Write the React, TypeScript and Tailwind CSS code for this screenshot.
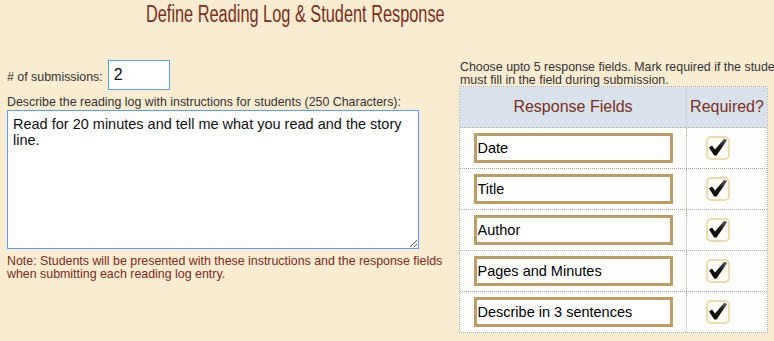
import React from "react";

const fields = ["Date", "Title", "Author", "Pages and Minutes", "Describe in 3 sentences"];

function Check() {
  return (
    <div className="relative w-[24px] h-[24px] rounded-[5px] border-2 border-[#eadcae] bg-[#fffdf6]">
      <svg width="24" height="24" viewBox="0 0 24 24" className="absolute left-[-2px] top-[-2px]">
        <defs>
          <linearGradient id="ck" x1="0" y1="1" x2="1" y2="0">
            <stop offset="0" stopColor="#000" />
            <stop offset="0.6" stopColor="#1a1a1a" />
            <stop offset="1" stopColor="#6a6a6a" />
          </linearGradient>
        </defs>
        <polygon
          points="3,11.5 6,9.6 9,13.6 18.2,2.8 21.2,4 10.6,19.6 8.2,19.6"
          fill="url(#ck)"
        />
      </svg>
    </div>
  );
}

export default function App() {
  return (
    <div
      className="w-[774px] h-[341px] overflow-hidden bg-[#faecd0] text-[#222]"
      style={{ fontFamily: "'Liberation Sans', Arial, sans-serif" }}
    >
      <div className="w-[590px] pt-[1px] text-center">
        <span className="inline-block text-[23px] leading-[27px] text-[#7b2e1c] scale-x-[0.71] whitespace-nowrap">
          Define Reading Log &amp; Student Response
        </span>
      </div>
      <div className="flex">
        <div className="w-[459px] shrink-0 pl-[7px]">
          <div className="flex items-end mt-[31px]">
            <span className="text-[12.4px] leading-[14px] mb-[6px] text-[#333]">
              # of submissions:
            </span>
            <input
              defaultValue="2"
              className="ml-[5px] w-[62px] h-[30px] border border-[#5a9cf0] bg-white px-[5px] text-[16px] text-[#111] outline-none"
            />
          </div>
          <div className="mt-[5px] text-[12.4px] leading-[14px] text-[#333] whitespace-nowrap">
            Describe the reading log with instructions for students (250 Characters):
          </div>
          <textarea
            defaultValue="Read for 20 minutes and tell me what you read and the story line."
            className="block mt-[1px] w-[412px] h-[139px] border border-[#5a9cf0] bg-white px-[5px] pt-[5px] text-[14.5px] leading-[16px] text-[#111] outline-none"
          />
          <div className="mt-[6px] text-[12.4px] leading-[13px] text-[#7a2a1e] whitespace-nowrap">
            Note: Students will be presented with these instructions and the response fields
            <br />
            when submitting each reading log entry.
          </div>
        </div>
        <div className="flex-1 min-w-0">
          <div className="mt-[32px] pl-[1px] text-[12.4px] leading-[12.5px] text-[#333] whitespace-nowrap">
            Choose upto 5 response fields. Mark required if the student
            <br />
            must fill in the field during submission.
          </div>
          <div className="w-[309px] border border-dotted border-[#aaaaaa] bg-[#fdfdfc]">
            <div className="flex h-[41px] border-b border-dotted border-[#aaaaaa] bg-[#d9e2ec]">
              <div className="w-[226px] flex items-center justify-center text-[16px] text-[#7b2e1c]">
                Response Fields
              </div>
              <div className="flex-1 flex items-center justify-center border-l border-[#c8d2dd] text-[16px] text-[#7b2e1c]">
                Required?
              </div>
            </div>
            {fields.map((f, i) => (
              <div
                key={f}
                className={
                  i < fields.length - 1
                    ? "flex h-[41px] border-b border-dotted border-[#aaaaaa]"
                    : "flex h-[40px]"
                }
              >
                <div className="w-[226px] flex items-center justify-center">
                  <input
                    defaultValue={f}
                    className="w-[199px] h-[30px] border-[3px] border-[#bb9d66] bg-white px-[1px] text-[14.5px] text-black outline-none"
                  />
                </div>
                <div className="flex-1 flex items-center border-l border-dotted border-[#aaaaaa] pl-[19px]">
                  <Check />
                </div>
              </div>
            ))}
          </div>
        </div>
      </div>
    </div>
  );
}
